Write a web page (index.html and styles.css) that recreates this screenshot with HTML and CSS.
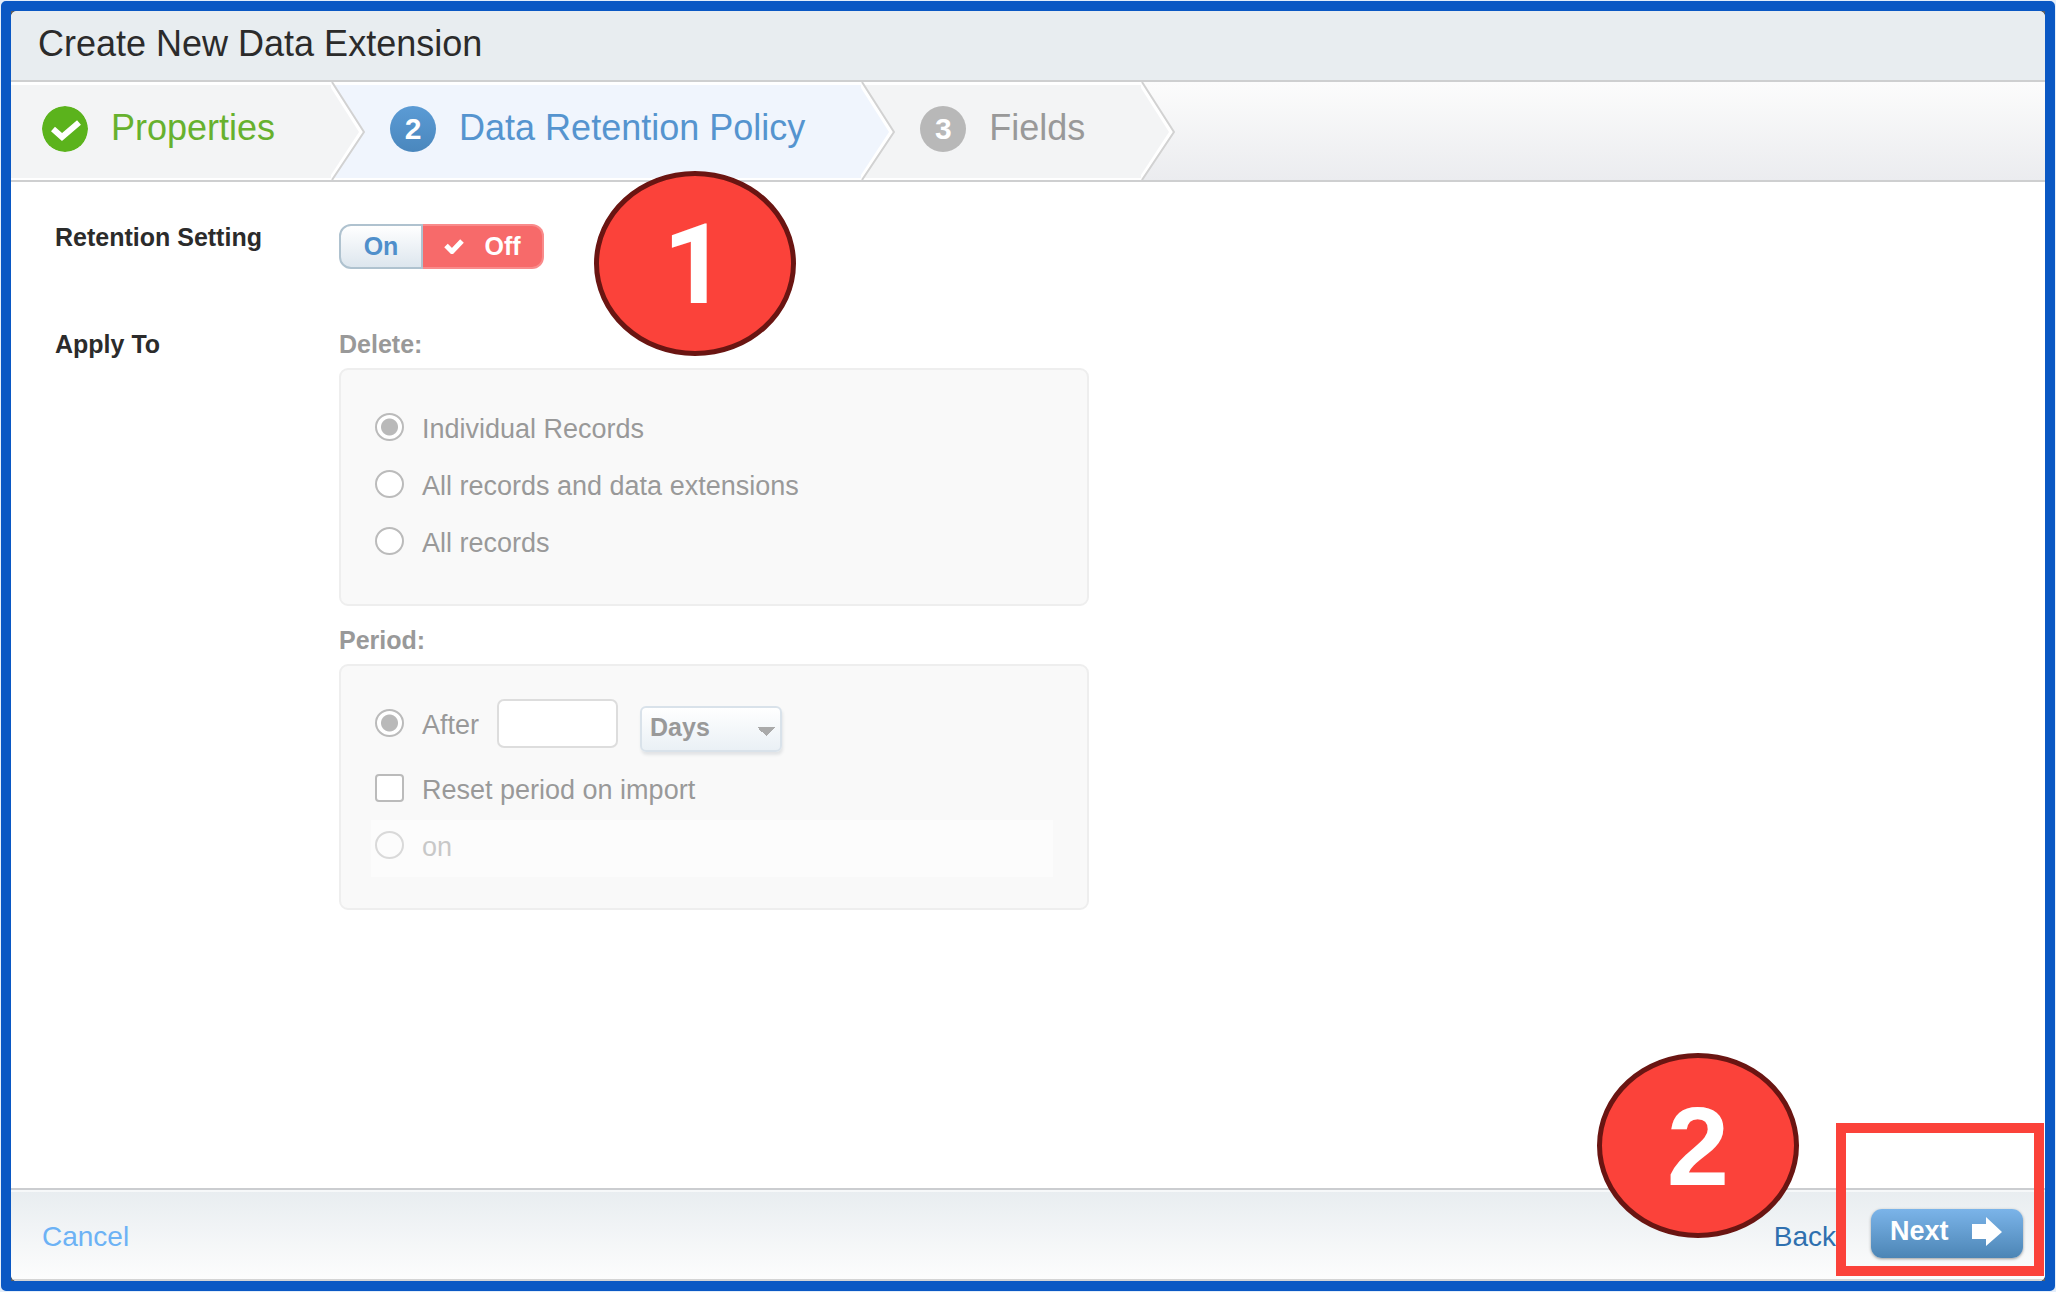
FILE: index.html
```html
<!DOCTYPE html>
<html lang="en">
<head>
<meta charset="utf-8">
<title>Create New Data Extension</title>
<link rel="stylesheet" href="styles.css">
</head>
<body>
<div class="frame">
  <div class="dialog">
    <header class="header"><h1 class="title">Create New Data Extension</h1></header>
    <ol class="steps">
      <li class="step step-done">
        <svg class="badge" viewBox="0 0 46 46" aria-hidden="true"><circle cx="23" cy="23" r="23" fill="#5bb31c"/><path d="M11 23l9 8L37 16.500" fill="none" stroke="#fff" stroke-width="6"/></svg>
        <span class="step-label">Properties</span>
        <svg class="chevron" viewBox="0 0 34 98" aria-hidden="true"><path d="M0 0H34V98H0z" fill="#fff"/><path d="M0 3H34V96H0z" fill="#f0f5fd"/><path d="M0 0L32 50L0 98z" fill="#fff"/><path d="M0 6L28 50L0 93z" fill="#f3f4f5"/><path d="M1 0L33 50L1 98" fill="none" stroke="#d2d2d2" stroke-width="2"/></svg>
      </li>
      <li class="step step-current" aria-current="step">
        <span class="badge badge-current">2</span>
        <span class="step-label">Data Retention Policy</span>
        <svg class="chevron" viewBox="0 0 34 98" aria-hidden="true"><path d="M0 0H34V98H0z" fill="#fff"/><path d="M0 3H34V96H0z" fill="#f3f4f5"/><path d="M0 0L32 50L0 98z" fill="#fff"/><path d="M0 6L28 50L0 93z" fill="#f0f5fd"/><path d="M1 0L33 50L1 98" fill="none" stroke="#d2d2d2" stroke-width="2"/></svg>
      </li>
      <li class="step step-next">
        <span class="badge badge-next">3</span>
        <span class="step-label">Fields</span>
        <svg class="chevron" viewBox="0 0 34 98" aria-hidden="true"><path d="M0 0L32 50L0 98z" fill="#fff"/><path d="M0 6L28 50L0 93z" fill="#f3f4f5"/><path d="M1 0L33 50L1 98" fill="none" stroke="#d2d2d2" stroke-width="2"/></svg>
      </li>
    </ol>
    <main class="form">
      <h2 class="row-title">Retention Setting</h2>
      <div class="setting">
        <div class="toggle" role="group" aria-label="Retention Setting">
          <button class="toggle-on" type="button" aria-pressed="false">On</button>
          <button class="toggle-off" type="button" aria-pressed="true"><svg class="tick" viewBox="0 0 20 16" aria-hidden="true"><path d="M2 7.500l6 6L18 3" fill="none" stroke="#fff" stroke-width="5"/></svg>Off</button>
        </div>
        <span class="marker marker-first">1</span>
      </div>
      <h2 class="row-title">Apply To</h2>
      <div class="groups">
        <fieldset class="group">
          <legend class="legend">Delete:</legend>
          <div class="box">
            <div class="option"><input class="control radio" type="radio" name="scope" id="individual" checked disabled><label for="individual">Individual Records</label></div>
            <div class="option"><input class="control radio" type="radio" name="scope" id="all-de" disabled><label for="all-de">All records and data extensions</label></div>
            <div class="option"><input class="control radio" type="radio" name="scope" id="all" disabled><label for="all">All records</label></div>
          </div>
        </fieldset>
        <fieldset class="group">
          <legend class="legend">Period:</legend>
          <div class="box">
            <div class="option option-after"><input class="control radio" type="radio" name="period" id="after" checked disabled><label for="after">After</label><input class="amount" type="text" aria-label="Number of units" disabled><select class="unit" aria-label="Unit" disabled><option>Days</option></select></div>
            <div class="option"><input class="control check" type="checkbox" id="reset" disabled><label for="reset">Reset period on import</label></div>
            <div class="option option-faded"><input class="control radio" type="radio" name="period" id="on-date" disabled><label for="on-date">on</label></div>
          </div>
        </fieldset>
      </div>
    </main>
    <footer class="footer">
      <a class="cancel" href="#">Cancel</a>
      <a class="back" href="#">Back</a>
      <button class="next" type="button">Next<svg class="arrow" viewBox="0 0 30 30" aria-hidden="true"><path d="M0 7H14V0L30 15L14 29V22H0z" fill="#fff"/></svg></button>
    </footer>
  </div>
  <span class="highlight"></span>
  <span class="marker marker-second">2</span>
</div>
</body>
</html>
```

FILE: styles.css
```css
* { box-sizing: border-box; }

body {
  margin: 0;
  padding: 1px;
  min-height: 100vh;
  display: flex;
  background: #e4eefa;
  font-family: "Liberation Sans", Arial, sans-serif;
  color: #2b2b2b;
}

.frame {
  position: relative;
  flex: 1;
  display: flex;
  border: 10px solid #0a58c4;
  border-radius: 5px;
  background: #5c5f62;
}

.dialog {
  flex: 1;
  display: flex;
  flex-direction: column;
  border-radius: 6px;
  overflow: hidden;
  background: #fff;
}

.header {
  padding: 13px 27px 16px;
  border-bottom: 2px solid #cecfd0;
  background: #e8edf0;
}

.title {
  margin: 0;
  font-size: 36px;
  line-height: 40px;
  font-weight: 400;
}

/* Wizard steps */
.steps {
  margin: 0;
  padding: 0;
  height: 100px;
  list-style: none;
  display: flex;
  border-bottom: 2px solid #cecfd0;
  background: linear-gradient(#fcfcfc, #ebecef);
}

.step {
  display: flex;
  align-items: center;
  padding-left: 25px;
  font-size: 36px;
  background: #f3f4f5;
  box-shadow: inset 0 3px #fff, inset 0 -2px #fff;
}

.step-done { padding-left: 31px; color: #67b12e; }
.step-current { color: #5594cf; background: #f0f5fd; }

.step-next {
  color: #999;
  background:
    linear-gradient(#f3f4f5, #f3f4f5) 0 3px / calc(100% - 34px) 93px no-repeat,
    linear-gradient(#fff, #fff) 0 0 / calc(100% - 34px) 100% no-repeat;
  box-shadow: none;
}

.step-label {
  margin-left: 23px;
  padding-bottom: 6px;
  white-space: nowrap;
}

.badge {
  width: 46px;
  height: 46px;
  margin-bottom: 4px;
  flex: none;
  border-radius: 50%;
  display: grid;
  place-items: center;
  color: #fff;
  font-size: 30px;
  line-height: 46px;
  font-weight: 700;
}

.badge-current { background: linear-gradient(#5b9bd5, #4a87bd); }
.badge-next { background: #b8b8b8; }

.chevron {
  width: 34px;
  height: 98px;
  margin-left: 56px;
  flex: none;
}

/* Form */
.form {
  flex: 1;
  display: grid;
  grid-template-columns: 284px minmax(0, 750px);
  grid-template-rows: 107px auto;
  align-content: start;
  padding: 40px 44px 20px;
}

.row-title, .legend {
  margin: 0;
  padding: 0;
  font-size: 25px;
  line-height: 30px;
  font-weight: 700;
}

.legend { color: #999; }

.setting { position: relative; padding-top: 2px; }

.toggle { display: flex; height: 45px; }

.toggle button {
  padding: 0 0 2px;
  border: 2px solid #afc2cf;
  font: 700 25px/30px "Liberation Sans", Arial, sans-serif;
}

.toggle .toggle-on {
  width: 84px;
  border-radius: 12px 0 0 12px;
  color: #4f8fcb;
  background: linear-gradient(#fff, #dde6ee);
}

.toggle .toggle-off {
  width: 121px;
  display: flex;
  align-items: center;
  justify-content: center;
  gap: 20px;
  border-color: #f98b8b;
  border-left: 0;
  border-radius: 0 12px 12px 0;
  color: #fff;
  background: #f76a6a;
}

.tick { width: 20px; height: 16px; }

.groups { display: flex; flex-direction: column; gap: 19px; }

.group { margin: 0; padding: 0; border: 0; min-width: 0; }

.box {
  margin-top: 9px;
  padding: 32px 34px 31px 30px;
  border: 2px solid #eee;
  border-radius: 9px;
  background: #f9f9f9;
}

.option {
  display: flex;
  align-items: center;
  padding: 0 0 2px 4px;
  color: #999;
  font-size: 27px;
  line-height: 55px;
}

.option-after { padding-bottom: 10px; }
.option-faded { background: #fff; opacity: .5; }

.control {
  appearance: none;
  flex: none;
  width: 29px;
  height: 28px;
  margin: 0 18px 6px 0;
  border: 2px solid #bbb;
  background: #fff;
}

.radio { border-radius: 50%; }
.radio:checked { background: radial-gradient(circle, #b9b9b9 8px, #fff 9px); }
.check { border-radius: 4px; }

.amount {
  width: 121px;
  height: 49px;
  margin: 0 0 4px 18px;
  border: 2px solid #ddd;
  border-radius: 7px;
  background: #fff;
}

.unit {
  appearance: none;
  width: 142px;
  height: 46px;
  margin: 6px 0 0 22px;
  padding: 0 0 4px 8px;
  border: 2px solid #d9e2ea;
  border-radius: 6px;
  opacity: 1;
  color: #999;
  font: 700 25px "Liberation Sans", Arial, sans-serif;
  background:
    linear-gradient(to bottom right, #aaa 50%, transparent 50%) 124px 19px / 9px 9px no-repeat,
    linear-gradient(to bottom left, #aaa 50%, transparent 50%) 115px 19px / 9px 9px no-repeat,
    linear-gradient(#fff, #eaf0f5);
  box-shadow: 1px 3px 3px #e2e4e6;
}

/* Footer */
.footer {
  display: flex;
  align-items: center;
  height: 93px;
  padding: 0 22px 4px 31px;
  border-top: 2px solid #cbcdd0;
  background: linear-gradient(#e8edf0, #fdfdfd);
  box-shadow: inset 0 2px #f6f8f9, inset 0 -2px #d4d4d4;
}

.cancel, .back {
  padding-top: 6px;
  font-size: 28px;
  text-decoration: none;
}

.cancel { margin-right: auto; color: #6cb2f5; }
.back { margin-right: 35px; color: #2f70af; }

.next {
  display: flex;
  align-items: center;
  justify-content: space-between;
  width: 152px;
  height: 49px;
  padding: 0 21px 4px 19px;
  border: 0;
  border-radius: 11px;
  color: #fff;
  font: 700 27px "Liberation Sans", Arial, sans-serif;
  background: linear-gradient(#7bb4e9, #4c85b5);
  box-shadow: 0 1px 3px #999;
}

.arrow { width: 30px; height: 30px; }

/* Callouts lying over the dialog */
.marker {
  position: absolute;
  width: 202px;
  height: 185px;
  border: 5px solid #6a1512;
  border-radius: 50%;
  background: #fb423a;
  color: #fff;
  font-size: 112px;
  line-height: 178px;
  font-weight: 700;
  text-align: center;
}

.marker-first {
  left: 255px;
  top: -51px;
  font-family: Roboto, Arial, sans-serif;
}

.marker-second { right: 246px; bottom: 43px; }

.highlight {
  position: absolute;
  right: 1px;
  bottom: 5px;
  width: 208px;
  height: 153px;
  border: 10px solid #fb423a;
}
```
